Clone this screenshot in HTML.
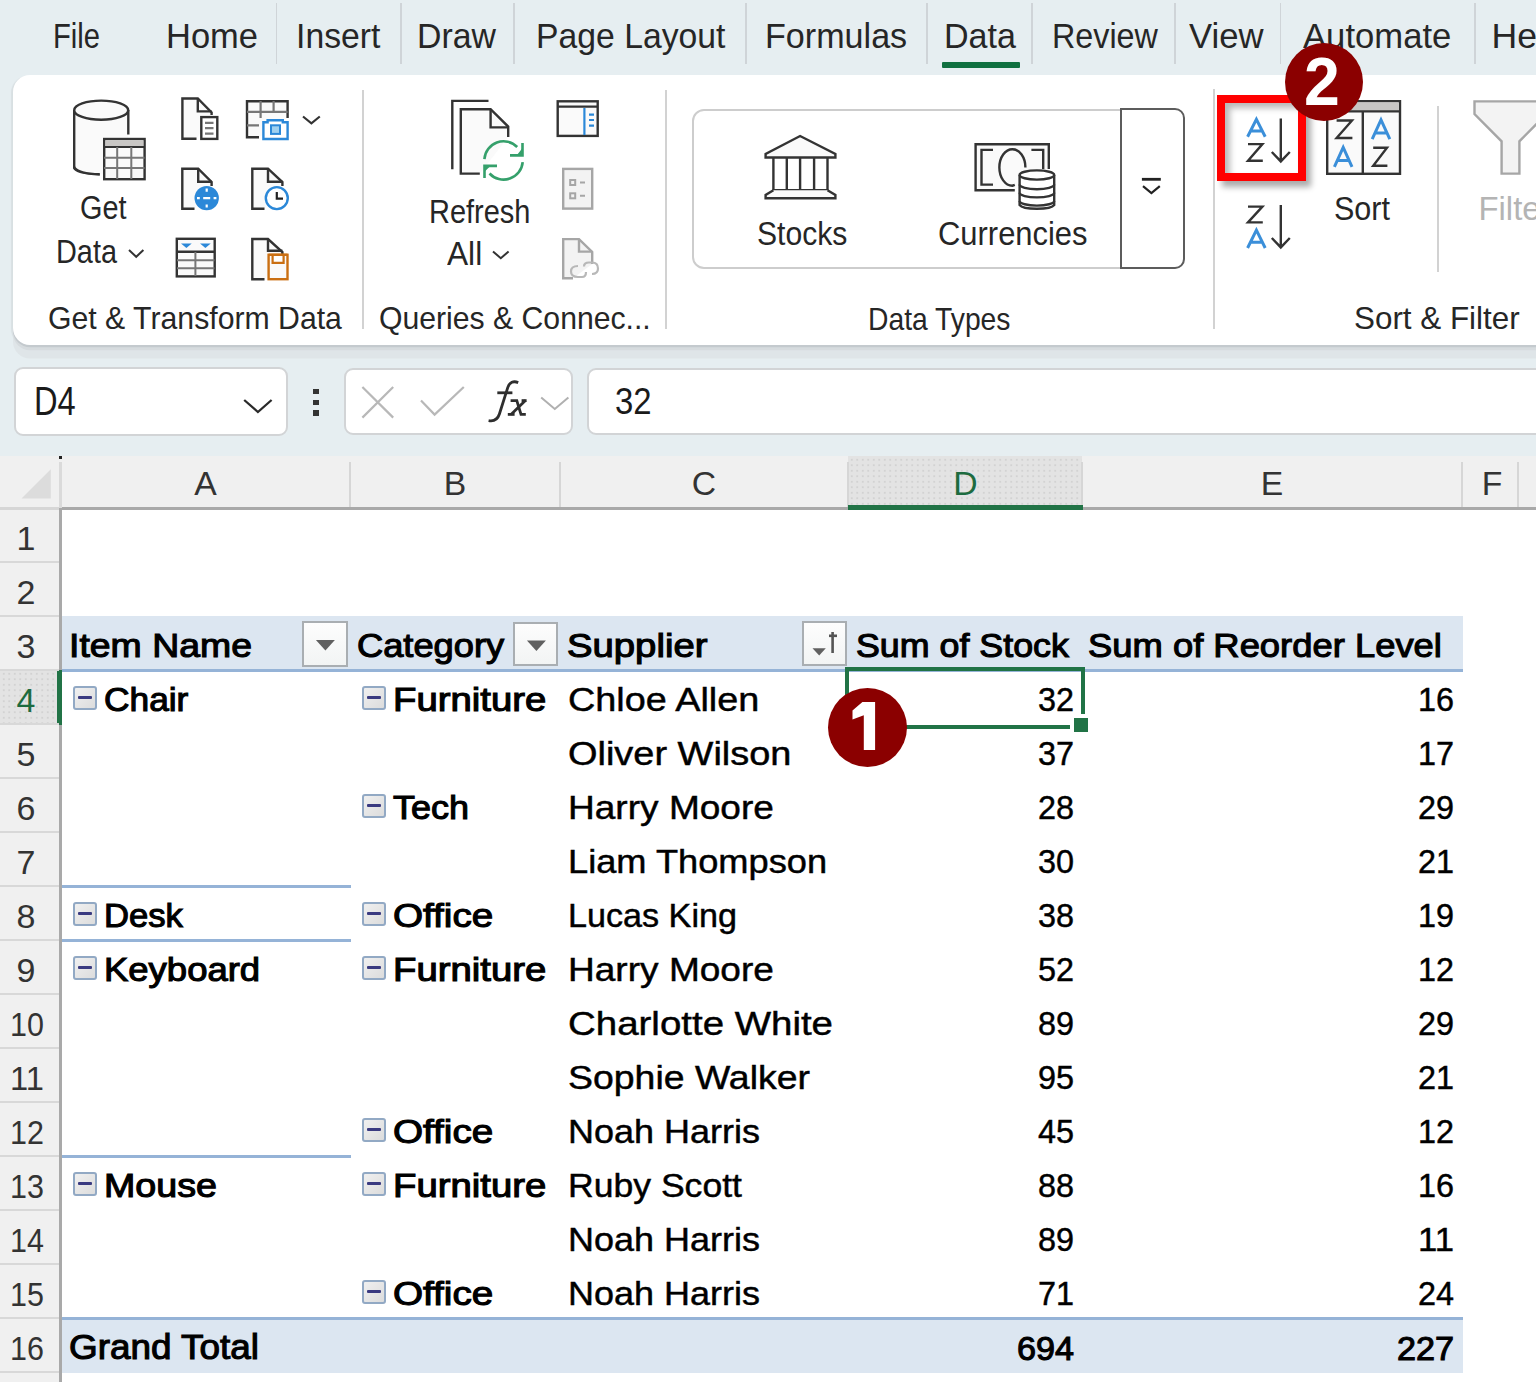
<!DOCTYPE html>
<html><head><meta charset="utf-8"><title>Excel</title>
<style>
html,body{margin:0;padding:0;}
body{width:1536px;height:1382px;overflow:hidden;position:relative;background:#e6eef1;font-family:"Liberation Sans",sans-serif;}
.t{position:absolute;white-space:nowrap;line-height:1;transform-origin:0 0;}
.a{position:absolute;}
</style></head><body>
<span class="t" style="left:53.00px;top:18.54px;font-size:35.61px;font-weight:normal;color:#262626;transform:scaleX(0.8193);">File</span>
<span class="t" style="left:166.00px;top:18.54px;font-size:35.61px;font-weight:normal;color:#262626;transform:scaleX(0.9683);">Home</span>
<span class="t" style="left:295.60px;top:18.54px;font-size:35.61px;font-weight:normal;color:#262626;transform:scaleX(0.9477);">Insert</span>
<span class="t" style="left:417.00px;top:18.54px;font-size:35.61px;font-weight:normal;color:#262626;transform:scaleX(0.9497);">Draw</span>
<span class="t" style="left:536.00px;top:18.54px;font-size:35.61px;font-weight:normal;color:#262626;transform:scaleX(0.9476);">Page Layout</span>
<span class="t" style="left:764.60px;top:18.54px;font-size:35.61px;font-weight:normal;color:#262626;transform:scaleX(0.9581);">Formulas</span>
<span class="t" style="left:944.00px;top:18.54px;font-size:35.61px;font-weight:normal;color:#262626;transform:scaleX(0.9569);">Data</span>
<span class="t" style="left:1052.00px;top:18.54px;font-size:35.61px;font-weight:normal;color:#262626;transform:scaleX(0.9070);">Review</span>
<span class="t" style="left:1189.00px;top:18.54px;font-size:35.61px;font-weight:normal;color:#262626;transform:scaleX(0.9735);">View</span>
<span class="t" style="left:1302.70px;top:18.54px;font-size:35.61px;font-weight:normal;color:#262626;transform:scaleX(0.9730);">Automate</span>
<span class="t" style="left:1491.50px;top:18.54px;font-size:35.61px;font-weight:normal;color:#262626;">He</span>
<div class="a" style="left:275.75px;top:3px;width:1.5px;height:61px;background:#cfd4d8"></div>
<div class="a" style="left:400.25px;top:3px;width:1.5px;height:61px;background:#cfd4d8"></div>
<div class="a" style="left:513.25px;top:3px;width:1.5px;height:61px;background:#cfd4d8"></div>
<div class="a" style="left:745.25px;top:3px;width:1.5px;height:61px;background:#cfd4d8"></div>
<div class="a" style="left:926.25px;top:3px;width:1.5px;height:61px;background:#cfd4d8"></div>
<div class="a" style="left:1031.25px;top:3px;width:1.5px;height:61px;background:#cfd4d8"></div>
<div class="a" style="left:1174.25px;top:3px;width:1.5px;height:61px;background:#cfd4d8"></div>
<div class="a" style="left:1279.75px;top:3px;width:1.5px;height:61px;background:#cfd4d8"></div>
<div class="a" style="left:1474.25px;top:3px;width:1.5px;height:61px;background:#cfd4d8"></div>
<div class="a" style="left:942px;top:62px;width:78px;height:5.5px;background:#107040;border-radius:1px"></div>
<div class="a" style="left:13px;top:75px;width:1600px;height:270.3px;background:#fff;border-radius:17px;box-shadow:0 2.3px 0 0 #c4cace,0 5.3px 0 0 #d6dbde,0 13.5px 0 0 #dfe5e8,-1.5px 1px 1px rgba(0,0,0,0.06)"></div>
<div class="a" style="left:362.40px;top:90px;width:2px;height:239px;background:#d2d2d2"></div>
<div class="a" style="left:664.80px;top:90px;width:2px;height:239px;background:#d2d2d2"></div>
<div class="a" style="left:1212.60px;top:89px;width:2px;height:240px;background:#d2d2d2"></div>
<div class="a" style="left:1436.60px;top:106px;width:2px;height:166px;background:#d2d2d2"></div>
<span class="t" style="left:48.00px;top:303.15px;font-size:30.52px;font-weight:normal;color:#262626;transform:scaleX(0.9903);">Get & Transform Data</span>
<span class="t" style="left:378.70px;top:303.15px;font-size:30.52px;font-weight:normal;color:#262626;transform:scaleX(0.9890);">Queries & Connec...</span>
<span class="t" style="left:868.00px;top:303.65px;font-size:30.52px;font-weight:normal;color:#262626;transform:scaleX(0.9263);">Data Types</span>
<span class="t" style="left:1353.70px;top:302.75px;font-size:30.52px;font-weight:normal;color:#262626;transform:scaleX(1.0283);">Sort & Filter</span>
<span class="t" style="left:80.00px;top:192.30px;font-size:32.70px;font-weight:normal;color:#262626;transform:scaleX(0.8821);">Get</span>
<span class="t" style="left:56.00px;top:236.30px;font-size:32.70px;font-weight:normal;color:#262626;transform:scaleX(0.8827);">Data</span>
<span class="t" style="left:428.60px;top:194.82px;font-size:33.87px;font-weight:normal;color:#262626;transform:scaleX(0.8552);">Refresh</span>
<span class="t" style="left:446.60px;top:238.18px;font-size:32.85px;font-weight:normal;color:#262626;transform:scaleX(0.9645);">All</span>
<span class="t" style="left:756.60px;top:216.73px;font-size:33.14px;font-weight:normal;color:#262626;transform:scaleX(0.9090);">Stocks</span>
<span class="t" style="left:938.40px;top:216.73px;font-size:33.14px;font-weight:normal;color:#262626;transform:scaleX(0.9337);">Currencies</span>
<span class="t" style="left:1334.00px;top:192.44px;font-size:33.72px;font-weight:normal;color:#262626;transform:scaleX(0.9055);">Sort</span>
<span class="t" style="left:1478.50px;top:192.78px;font-size:32.85px;font-weight:normal;color:#b4b4b4;">Filte</span>
<div class="a" style="left:691.6px;top:108.7px;width:493px;height:160px;box-sizing:border-box;border:2px solid #cdcdcd;border-radius:12px"></div>
<div class="a" style="left:1120.4px;top:108.1px;width:64.5px;height:161.2px;box-sizing:border-box;border:2.2px solid #5c5c5c;border-left-width:2.4px;border-radius:0 10px 10px 0;background:#fff"></div>
<svg class="a" style="left:0;top:0" width="1536" height="460" viewBox="0 0 1536 460" fill="none" stroke-linecap="butt" stroke-linejoin="miter">
<!-- Get Data: cylinder + table -->
<g stroke="#333" stroke-width="2.4">
 <path d="M74.2,110 V168 Q76,173 99.8,174.3" fill="#fafafa"/>
 <path d="M74.2,110 V168 Q80,174 99.8,174.3 H103 V137.8 H128.3 V110" fill="#fafafa" stroke="none"/>
 <path d="M74.2,110 V167" />
 <path d="M128.3,110 V134.5"/>
 <path d="M74.2,167 Q78,173.5 99.8,174.3"/>
 <ellipse cx="101.2" cy="110.2" rx="27" ry="9.6" fill="#fafafa"/>
 <rect x="104.2" y="139" width="40.4" height="40.2" fill="#fafafa"/>
</g>
<rect x="105.4" y="140.2" width="38" height="6" fill="#c8c6c4"/>
<g stroke="#333" stroke-width="2"><path d="M104,147 H144.6"/></g>
<g stroke="#777" stroke-width="2"><path d="M117.2,147 V179 M131.3,147 V179 M104,157.7 H144.6 M104,168 H144.6"/></g>

<!-- From text/csv -->
<g stroke="#333" stroke-width="2.4">
 <path d="M196.5,138.8 H182.4 V98.5 H197.8 L211.6,112.4 V115" fill="#fafafa"/>
 <path d="M197.8,98.5 V111.4 H211.6"/>
 <rect x="201.3" y="117.1" width="16" height="21.8" fill="#fff"/>
</g>
<g stroke="#777" stroke-width="2.2"><path d="M205,122.8 H213.5 M205,128.2 H213.5 M205,133.6 H213.5"/></g>

<!-- From table with camera -->
<g stroke="#333" stroke-width="2.4">
 <path d="M259,137.2 H247 V101.2 H287.6 V118" fill="#fafafa"/>
</g>
<g stroke="#777" stroke-width="2.2"><path d="M260.6,101 V118 M273.6,101 V112 M247,111.9 H287.6 M247,125.4 H259"/></g>
<g stroke="#2b88d8" stroke-width="2.4">
 <path d="M263.4,139 V122.2 H267.6 V120.3 H282.8 V122.2 H287.6 V139 Z" fill="#fff"/>
</g>
<rect x="271" y="125.3" width="9" height="8.6" fill="#9fd0ef" stroke="#2b88d8" stroke-width="2"/>
<path d="M303,116.5 L311.4,123.3 L319.8,116.5" stroke="#333" stroke-width="2.2"/>

<!-- From web -->
<g stroke="#333" stroke-width="2.4">
 <path d="M194.5,208.8 H182.3 V168.7 H198.2 L211.6,182 V186" fill="#fafafa"/>
 <path d="M198.2,168.7 V181.8 H211.6"/>
</g>
<circle cx="206.7" cy="198.1" r="12.2" fill="#2b88d8"/>
<g stroke="#fff" stroke-width="2.2"><path d="M197,198.1 H199.8 M203.2,198.1 H210.2 M213.6,198.1 H216.4 M206.7,188.6 V191.8 M206.7,204.4 V207.6"/></g>

<!-- From recent -->
<g stroke="#333" stroke-width="2.4">
 <path d="M264.5,208.8 H252.3 V168.7 H268 L282.4,182 V186" fill="#fafafa"/>
 <path d="M268,168.7 V181.8 H282.4"/>
</g>
<circle cx="276.8" cy="198.1" r="11" fill="#fff" stroke="#2b88d8" stroke-width="2.4"/>
<path d="M276.8,192 V198.6 H283" stroke="#222" stroke-width="2.2"/>

<!-- Existing connections table -->
<rect x="176.8" y="238.8" width="37.9" height="37.6" fill="#fafafa" stroke="#333" stroke-width="2.4"/>
<path d="M176.8,251.7 H214.7" stroke="#333" stroke-width="2.4"/>
<g stroke="#777" stroke-width="2"><path d="M195.4,252 V276 M177,260.2 H214.5 M177,268.2 H214.5"/></g>
<polygon points="181,243.4 191.7,243.4 186.4,248" fill="#2b88d8"/>
<polygon points="200,243.4 210.7,243.4 205.4,248" fill="#2b88d8"/>

<!-- Doc with orange -->
<g stroke="#333" stroke-width="2.4">
 <path d="M264.5,279.2 H252.3 V239 H268 L282.4,252 V254" fill="#fafafa"/>
 <path d="M268,239 V250.8 H282.4"/>
</g>
<rect x="268.6" y="254.8" width="18.9" height="24.4" fill="#fafafa" stroke="#ca6f12" stroke-width="2.4"/>
<path d="M272.6,254.8 V262.8 H283.6 V254.8" stroke="#ca6f12" stroke-width="2.2" fill="#fff"/>
<path d="M268.6,254.8 H287.5" stroke="#ca6f12" stroke-width="2.4"/>

<!-- Get Data chevron -->
<path d="M129,250 L136.2,256.8 L143.4,250" stroke="#333" stroke-width="2"/>

<!-- Refresh All -->
<g stroke="#333" stroke-width="2.4">
 <path d="M452.3,169.3 V100.9 H488.5"/>
 <path d="M479.8,173.6 H460.8 V109.2 H490.6 L508.2,126.6 V137" fill="#fafafa"/>
 <path d="M490.6,109.2 V127.4 H508.2"/>
</g>
<g stroke="#35a06b" stroke-width="2.6" fill="none">
 <path d="M484.4,159.2 A19.2,19.2 0 0 1 517.2,147"/>
 <path d="M522.7,162.1 A19.2,19.2 0 0 1 489.5,173.5"/>
 <path d="M510,155.4 H522.5 V143.1"/>
 <path d="M497,165.9 H484.5 V178"/>
</g>
<polygon points="522.5,148 522.5,155.4 516.6,155.4" fill="#35a06b"/>
<polygon points="484.5,165.9 490.4,165.9 484.5,171.8" fill="#35a06b"/>
<path d="M493,251.5 L500.8,258.2 L508.6,251.5" stroke="#333" stroke-width="2"/>

<!-- Queries pane -->
<rect x="557.7" y="101.3" width="40" height="34.6" fill="#fafafa" stroke="#333" stroke-width="2.4"/>
<path d="M557.7,106.6 H597.7" stroke="#333" stroke-width="2.2"/>
<path d="M584.4,108 V135" stroke="#2b88d8" stroke-width="2.2"/>
<g stroke="#2b88d8" stroke-width="2.2"><path d="M589,114.6 H594 M589,120 H594 M589,125.6 H594"/></g>
<!-- properties gray -->
<rect x="563.2" y="168.9" width="29" height="39.7" fill="#f3f3f3" stroke="#a6a6a6" stroke-width="2.4"/>
<g stroke="#a6a6a6" stroke-width="2"><rect x="570.2" y="180" width="5" height="5"/><rect x="570.2" y="193.3" width="5" height="5"/><path d="M580,182.5 H585 M580,195.8 H585"/></g>
<!-- edit links gray -->
<g stroke="#a6a6a6" stroke-width="2.4">
 <path d="M573,278.3 H563.2 V239.1 H579 L592.2,252 V264" fill="#f3f3f3"/>
 <path d="M579,239.1 V251.6 H592.2"/>
</g>
<g stroke="#b8b8b8" stroke-width="2.2"><path d="M578,266 Q571,266 571,271.5 Q571,277 578,277 H582 Q586,277 586,272"/><path d="M584,266.5 Q584,262.5 589,262.5 H592 Q598,262.5 598,268.5 Q598,274 592,274"/></g>

<!-- Bank -->
<g stroke="#333" stroke-width="2.4">
 <path d="M765.6,157.5 V154 L800.1,136 L835.4,154 V157.5 Z" fill="#fafafa"/>
 <path d="M773.4,158 V190 M786.8,158 V190 M800.1,158 V190 M814.1,158 V190 M827.5,158 V190"/>
 <path d="M773.4,190.3 H827.5"/>
 <path d="M773.4,190.3 L765.6,195 V198.3 H835.4 V195 L827.5,190.3" fill="#fafafa"/>
</g>

<!-- Currency -->
<g stroke="#333" stroke-width="2.4">
 <path d="M1014.8,190.3 H975.6 V144.2 H1048.8 V169" fill="#fafafa"/>
 <path d="M993,149.9 H981.5 V184.6 H993"/>
 <path d="M1031.4,149.9 H1043.2 V169"/>
 <path d="M1014.8,184.8 Q1012.4,185.7 1012.4,185.7 A13,18.2 0 0 1 1012.4,149.2 A13,18.2 0 0 1 1025.4,167.4"/>
 <path d="M1019.6,175 V205 A17.6,4.6 0 0 0 1054.2,205 V175" fill="#fff"/>
 <ellipse cx="1036.9" cy="175" rx="17.3" ry="4.6" fill="#fff"/>
 <path d="M1019.6,184.6 A17.3,4.6 0 0 0 1054.2,184.6 M1019.6,192.8 A17.3,4.6 0 0 0 1054.2,192.8 M1019.6,201 A17.3,4.6 0 0 0 1054.2,201"/>
</g>

<!-- gallery dropdown glyph -->
<rect x="1141.9" y="177.9" width="18.9" height="2.8" fill="#222"/>
<path d="M1143,186.2 L1151.4,193 L1159.8,186.2" stroke="#222" stroke-width="2.2"/>

<!-- Sort A-Z small -->
<g font-family="Liberation Sans" font-size="21" >
</g>
<!-- Sort big icon -->
<rect x="1327.2" y="101.2" width="72.8" height="72.6" fill="#fafafa" stroke="#333" stroke-width="2.4"/>
<rect x="1328.4" y="102.4" width="70.4" height="8.4" fill="#c8c6c4"/>
<path d="M1327.2,111.4 H1400 M1362.8,111.4 V173.8" stroke="#333" stroke-width="2.4"/>

<!-- Filter funnel -->
<path d="M1474.5,101.4 H1546.5 V114 L1519.4,141.3 V173.6 H1501.6 V141.3 L1474.5,114 Z" fill="#f3f3f3" stroke="#a6a6a6" stroke-width="2.4"/>

<!-- sort letters -->
<g stroke="#3b8fd9" stroke-width="3" stroke-linejoin="miter">
 <path d="M1247.6,136.8 L1256.4,119.4 L1265.2,136.8 M1250.6,131 H1262.2"/>
 <path d="M1247.6,248 L1256.4,230.2 L1265.2,248 M1250.6,242.2 H1262.2"/>
 <path d="M1334.4,166.9 L1343.2,147.4 L1352,166.9 M1337.6,160.6 H1348.8"/>
 <path d="M1372.2,139.2 L1381,119.9 L1389.8,139.2 M1375.4,132.9 H1386.6"/>
</g>
<g stroke="#333" stroke-width="2.4">
 <path d="M1248,144.1 H1262.4 L1248,160.8 H1262.8"/>
 <path d="M1248,206.6 H1262.4 L1248,222.4 H1262.8"/>
 <path d="M1336.6,120.5 H1352 L1336.6,138 H1352.4"/>
 <path d="M1373.2,147.8 H1387 L1373.2,165.7 H1387.4"/>
 <path d="M1280.8,118.6 V161 M1271.8,152 L1280.8,161.4 L1289.8,152"/>
 <path d="M1280.8,205 V247 M1271.8,238 L1280.8,247.4 L1289.8,238"/>
</g>
</svg>
<div class="a" style="left:14.3px;top:367.3px;width:273.5px;height:69px;box-sizing:border-box;background:#fff;border:2.4px solid #d2d4d6;border-radius:9px"></div>
<div class="a" style="left:344.3px;top:368.2px;width:229.2px;height:67.2px;box-sizing:border-box;background:#fff;border:2.4px solid #d2d4d6;border-radius:9px"></div>
<div class="a" style="left:586.5px;top:368.2px;width:1000px;height:67.2px;box-sizing:border-box;background:#fff;border:2.4px solid #d2d4d6;border-radius:9px"></div>
<span class="t" style="left:33.80px;top:381.64px;font-size:39.97px;font-weight:normal;color:#1a1a1a;transform:scaleX(0.8163);">D4</span>
<span class="t" style="left:615.00px;top:382.99px;font-size:37.79px;font-weight:normal;color:#1a1a1a;transform:scaleX(0.8709);">32</span>
<svg class="a" style="left:0;top:0" width="1536" height="460" viewBox="0 0 1536 460" fill="none">
<!-- Formula bar: X check fx chevrons -->
<path d="M362.4,387 L393.2,417.6 M393.2,387 L362.4,417.6" stroke="#b8b8b8" stroke-width="2.2"/>
<path d="M421,400.6 L434.6,414.6 L463.8,387" stroke="#b8b8b8" stroke-width="2.2"/>
<path d="M541.2,397.6 L554.8,409 L568.4,397.6" stroke="#b0b0b0" stroke-width="2"/>
<path d="M244.2,400 L257.9,412 L271.6,400" stroke="#2a2a2a" stroke-width="2.3"/>
<g stroke="#2e2e2e" stroke-width="2.8" fill="none" stroke-linecap="butt">
 <path d="M518.2,382.6 C513.5,380.6 509.6,382.2 507.8,387.4 L499.4,414 C497.6,419.6 494.2,421.6 488.6,420.6"/>
 <path d="M497.3,392.8 H512.4"/>
 <path d="M510.6,400.6 H516.8 L521,414.4 H525.8"/>
 <path d="M521.6,400.6 H526.6"/>
 <path d="M525.4,400.6 L511,414.4"/>
 <path d="M507.8,414.4 H514.6"/>
</g>
</svg>
<div class="a" style="left:312.9px;top:388.8px;width:6px;height:5.5px;background:#333"></div>
<div class="a" style="left:312.9px;top:399.5px;width:6px;height:5.5px;background:#333"></div>
<div class="a" style="left:312.9px;top:410.2px;width:6px;height:5.5px;background:#333"></div>
<div class="a" style="left:0;top:456px;width:1536px;height:926px;background:#fff"></div>
<div class="a" style="left:0;top:456px;width:1536px;height:52px;background:#f0f0f0"></div>
<div class="a" style="left:0;top:456px;width:60px;height:926px;background:#f0f0f0"></div>
<div class="a" style="left:848px;top:456px;width:234px;height:52px;background:#e3e3e3 radial-gradient(circle,#d2d2d2 0.9px,transparent 1.2px) 1px 1px/5.5px 5.5px"></div>
<div class="a" style="left:848px;top:505px;width:234.5px;height:5px;background:#217346"></div>
<div class="a" style="left:0;top:670px;width:60px;height:55px;background:#e3e3e3 radial-gradient(circle,#d2d2d2 0.9px,transparent 1.2px) 1px 1px/5.5px 5.5px"></div>
<div class="a" style="left:57px;top:670px;width:5px;height:55px;background:#217346"></div>
<svg class="a" style="left:0;top:456px" width="60" height="52"><polygon points="50.8,13.3 50.8,42.6 21.5,42.6" fill="#dcdcdc"/></svg>
<div class="a" style="left:348.5px;top:462px;width:2px;height:45px;background:#d6d6d6"></div>
<div class="a" style="left:558.8px;top:462px;width:2px;height:45px;background:#d6d6d6"></div>
<div class="a" style="left:847.0px;top:462px;width:2px;height:45px;background:#d6d6d6"></div>
<div class="a" style="left:1081.0px;top:462px;width:2px;height:45px;background:#d6d6d6"></div>
<div class="a" style="left:1460.7px;top:462px;width:2px;height:45px;background:#d6d6d6"></div>
<div class="a" style="left:1517.4px;top:462px;width:2px;height:45px;background:#d6d6d6"></div>
<div class="a" style="left:62px;top:507px;width:1474px;height:3px;background:#a9a9a9"></div>
<div class="a" style="left:0;top:507px;width:62px;height:3px;background:#d6d6d6"></div>
<div class="a" style="left:59px;top:508px;width:3px;height:874px;background:#a9a9a9"></div>
<div class="a" style="left:59px;top:462px;width:3px;height:46px;background:#dadada"></div>
<div class="a" style="left:59px;top:456px;width:3px;height:3px;background:#222"></div>
<div class="a" style="left:848px;top:505px;width:234.5px;height:5px;background:#217346"></div>
<div class="a" style="left:57px;top:670px;width:5px;height:55px;background:#217346"></div>
<div class="a" style="left:0;top:561.0px;width:59px;height:2px;background:#d8d8d8"></div>
<div class="a" style="left:0;top:615.0px;width:59px;height:2px;background:#d8d8d8"></div>
<div class="a" style="left:0;top:669.0px;width:59px;height:2px;background:#d8d8d8"></div>
<div class="a" style="left:0;top:723.0px;width:59px;height:2px;background:#d8d8d8"></div>
<div class="a" style="left:0;top:777.0px;width:59px;height:2px;background:#d8d8d8"></div>
<div class="a" style="left:0;top:831.0px;width:59px;height:2px;background:#d8d8d8"></div>
<div class="a" style="left:0;top:885.0px;width:59px;height:2px;background:#d8d8d8"></div>
<div class="a" style="left:0;top:939.0px;width:59px;height:2px;background:#d8d8d8"></div>
<div class="a" style="left:0;top:993.0px;width:59px;height:2px;background:#d8d8d8"></div>
<div class="a" style="left:0;top:1047.0px;width:59px;height:2px;background:#d8d8d8"></div>
<div class="a" style="left:0;top:1101.0px;width:59px;height:2px;background:#d8d8d8"></div>
<div class="a" style="left:0;top:1155.0px;width:59px;height:2px;background:#d8d8d8"></div>
<div class="a" style="left:0;top:1209.0px;width:59px;height:2px;background:#d8d8d8"></div>
<div class="a" style="left:0;top:1263.0px;width:59px;height:2px;background:#d8d8d8"></div>
<div class="a" style="left:0;top:1317.0px;width:59px;height:2px;background:#d8d8d8"></div>
<div class="a" style="left:0;top:1371.0px;width:59px;height:2px;background:#d8d8d8"></div>
<div class="a" style="left:0;top:1425.0px;width:59px;height:2px;background:#d8d8d8"></div>
<span class="t" style="left:194.25px;top:467.44px;font-size:33.72px;font-weight:normal;color:#333;">A</span>
<span class="t" style="left:443.75px;top:467.44px;font-size:33.72px;font-weight:normal;color:#333;">B</span>
<span class="t" style="left:691.83px;top:467.44px;font-size:33.72px;font-weight:normal;color:#333;">C</span>
<span class="t" style="left:953.33px;top:467.44px;font-size:33.72px;font-weight:normal;color:#1d6b3f;">D</span>
<span class="t" style="left:1260.75px;top:467.44px;font-size:33.72px;font-weight:normal;color:#333;">E</span>
<span class="t" style="left:1481.70px;top:467.44px;font-size:33.72px;font-weight:normal;color:#333;">F</span>
<span class="t" style="left:16.40px;top:520.59px;font-size:34.01px;font-weight:normal;color:#333;">1</span>
<span class="t" style="left:16.40px;top:574.59px;font-size:34.01px;font-weight:normal;color:#333;">2</span>
<span class="t" style="left:16.40px;top:628.59px;font-size:34.01px;font-weight:normal;color:#333;">3</span>
<span class="t" style="left:16.40px;top:682.59px;font-size:34.01px;font-weight:normal;color:#1d6b3f;">4</span>
<span class="t" style="left:16.40px;top:736.59px;font-size:34.01px;font-weight:normal;color:#333;">5</span>
<span class="t" style="left:16.40px;top:790.59px;font-size:34.01px;font-weight:normal;color:#333;">6</span>
<span class="t" style="left:16.40px;top:844.59px;font-size:34.01px;font-weight:normal;color:#333;">7</span>
<span class="t" style="left:16.40px;top:898.59px;font-size:34.01px;font-weight:normal;color:#333;">8</span>
<span class="t" style="left:16.40px;top:952.59px;font-size:34.01px;font-weight:normal;color:#333;">9</span>
<span class="t" style="left:10.40px;top:1006.59px;font-size:34.01px;font-weight:normal;color:#333;transform:scaleX(0.8963);">10</span>
<span class="t" style="left:10.40px;top:1060.59px;font-size:34.01px;font-weight:normal;color:#333;transform:scaleX(0.9602);">11</span>
<span class="t" style="left:10.40px;top:1114.59px;font-size:34.01px;font-weight:normal;color:#333;transform:scaleX(0.8963);">12</span>
<span class="t" style="left:10.40px;top:1168.59px;font-size:34.01px;font-weight:normal;color:#333;transform:scaleX(0.8963);">13</span>
<span class="t" style="left:10.40px;top:1222.59px;font-size:34.01px;font-weight:normal;color:#333;transform:scaleX(0.8963);">14</span>
<span class="t" style="left:10.40px;top:1276.59px;font-size:34.01px;font-weight:normal;color:#333;transform:scaleX(0.8963);">15</span>
<span class="t" style="left:10.40px;top:1330.59px;font-size:34.01px;font-weight:normal;color:#333;transform:scaleX(0.8963);">16</span>
<div class="a" style="left:62px;top:616px;width:1401px;height:54px;background:#dce6f1"></div>
<div class="a" style="left:62px;top:669px;width:1401px;height:3px;background:#95b3d7"></div>
<div class="a" style="left:62px;top:1318px;width:1401px;height:55px;background:#dce6f1"></div>
<div class="a" style="left:62px;top:1317px;width:1401px;height:3px;background:#95b3d7"></div>
<div class="a" style="left:62px;top:884.5px;width:289px;height:3px;background:#95b3d7"></div>
<div class="a" style="left:62px;top:938.5px;width:289px;height:3px;background:#95b3d7"></div>
<div class="a" style="left:62px;top:1154.5px;width:289px;height:3px;background:#95b3d7"></div>
<div class="a" style="left:302.3px;top:621.2px;width:45.599999999999966px;height:45.59999999999991px;box-sizing:border-box;border:2.5px solid #a9aeb2;background:linear-gradient(#fdfdfd,#f2f4f4)"></div>
<div class="a" style="left:513.3px;top:621.8px;width:45.10000000000002px;height:44.10000000000002px;box-sizing:border-box;border:2.5px solid #a9aeb2;background:linear-gradient(#fdfdfd,#f2f4f4)"></div>
<div class="a" style="left:802px;top:621.2px;width:45.39999999999998px;height:45.299999999999955px;box-sizing:border-box;border:2.5px solid #a9aeb2;background:linear-gradient(#fdfdfd,#f2f4f4)"></div>
<svg class="a" style="left:0;top:600px" width="900" height="80"><polygon points="315.9,40 334.9,40 325.4,50.5" fill="#606060"/><polygon points="526.9,40.4 545.9,40.4 536.4,50.9" fill="#606060"/><polygon points="812.5,48.3 825.8,48.3 819.2,55.6" fill="#606060"/><rect x="831.3" y="32" width="2.6" height="21" fill="#555"/><rect x="829" y="34.5" width="8" height="2.6" fill="#555"/></svg>
<span class="t" style="left:69.00px;top:629.45px;font-size:32.99px;font-weight:normal;color:#000;transform:scaleX(1.1342);-webkit-text-stroke:1.1px #000;">Item Name</span>
<span class="t" style="left:357.00px;top:629.45px;font-size:32.99px;font-weight:normal;color:#000;transform:scaleX(1.0994);-webkit-text-stroke:1.1px #000;">Category</span>
<span class="t" style="left:566.80px;top:629.45px;font-size:32.99px;font-weight:normal;color:#000;transform:scaleX(1.1606);-webkit-text-stroke:1.1px #000;">Supplier</span>
<span class="t" style="left:856.00px;top:629.45px;font-size:32.99px;font-weight:normal;color:#000;transform:scaleX(1.0852);-webkit-text-stroke:1.1px #000;">Sum of Stock</span>
<span class="t" style="left:1088.00px;top:629.45px;font-size:32.99px;font-weight:normal;color:#000;transform:scaleX(1.1030);-webkit-text-stroke:1.1px #000;">Sum of Reorder Level</span>
<div class="a" style="left:73px;top:685.7px;width:24px;height:24px;box-sizing:border-box;border:2.5px solid #92a9c4;border-radius:3px;background:linear-gradient(135deg,#f0f0f0,#dcdcdc)"></div><div class="a" style="left:78.1px;top:696.1px;width:13.8px;height:2.8px;background:#3a3a80;border-radius:1px"></div>
<span class="t" style="left:104.30px;top:683.35px;font-size:32.99px;font-weight:normal;color:#000;transform:scaleX(1.0703);-webkit-text-stroke:1.1px #000;">Chair</span>
<div class="a" style="left:362px;top:685.7px;width:24px;height:24px;box-sizing:border-box;border:2.5px solid #92a9c4;border-radius:3px;background:linear-gradient(135deg,#f0f0f0,#dcdcdc)"></div><div class="a" style="left:367.1px;top:696.1px;width:13.8px;height:2.8px;background:#3a3a80;border-radius:1px"></div>
<span class="t" style="left:393.30px;top:683.35px;font-size:32.99px;font-weight:normal;color:#000;transform:scaleX(1.1625);-webkit-text-stroke:1.1px #000;">Furniture</span>
<span class="t" style="left:568.00px;top:683.35px;font-size:32.99px;font-weight:normal;color:#000;transform:scaleX(1.1461);-webkit-text-stroke:0.45px #000;">Chloe Allen</span>
<span class="t" style="left:1038.20px;top:682.49px;font-size:34.01px;font-weight:normal;color:#000;transform:scaleX(0.9519);-webkit-text-stroke:0.45px #000;">32</span>
<span class="t" style="left:1418.30px;top:682.49px;font-size:34.01px;font-weight:normal;color:#000;transform:scaleX(0.9519);-webkit-text-stroke:0.45px #000;">16</span>
<span class="t" style="left:568.00px;top:737.35px;font-size:32.99px;font-weight:normal;color:#000;transform:scaleX(1.1501);-webkit-text-stroke:0.45px #000;">Oliver Wilson</span>
<span class="t" style="left:1038.20px;top:736.49px;font-size:34.01px;font-weight:normal;color:#000;transform:scaleX(0.9519);-webkit-text-stroke:0.45px #000;">37</span>
<span class="t" style="left:1418.30px;top:736.49px;font-size:34.01px;font-weight:normal;color:#000;transform:scaleX(0.9519);-webkit-text-stroke:0.45px #000;">17</span>
<div class="a" style="left:362px;top:793.7px;width:24px;height:24px;box-sizing:border-box;border:2.5px solid #92a9c4;border-radius:3px;background:linear-gradient(135deg,#f0f0f0,#dcdcdc)"></div><div class="a" style="left:367.1px;top:804.1px;width:13.8px;height:2.8px;background:#3a3a80;border-radius:1px"></div>
<span class="t" style="left:393.30px;top:791.35px;font-size:32.99px;font-weight:normal;color:#000;transform:scaleX(1.0906);-webkit-text-stroke:1.1px #000;">Tech</span>
<span class="t" style="left:568.00px;top:791.35px;font-size:32.99px;font-weight:normal;color:#000;transform:scaleX(1.1235);-webkit-text-stroke:0.45px #000;">Harry Moore</span>
<span class="t" style="left:1038.20px;top:790.49px;font-size:34.01px;font-weight:normal;color:#000;transform:scaleX(0.9519);-webkit-text-stroke:0.45px #000;">28</span>
<span class="t" style="left:1418.30px;top:790.49px;font-size:34.01px;font-weight:normal;color:#000;transform:scaleX(0.9519);-webkit-text-stroke:0.45px #000;">29</span>
<span class="t" style="left:568.00px;top:845.35px;font-size:32.99px;font-weight:normal;color:#000;transform:scaleX(1.0984);-webkit-text-stroke:0.45px #000;">Liam Thompson</span>
<span class="t" style="left:1038.20px;top:844.49px;font-size:34.01px;font-weight:normal;color:#000;transform:scaleX(0.9519);-webkit-text-stroke:0.45px #000;">30</span>
<span class="t" style="left:1418.30px;top:844.49px;font-size:34.01px;font-weight:normal;color:#000;transform:scaleX(0.9519);-webkit-text-stroke:0.45px #000;">21</span>
<div class="a" style="left:73px;top:901.7px;width:24px;height:24px;box-sizing:border-box;border:2.5px solid #92a9c4;border-radius:3px;background:linear-gradient(135deg,#f0f0f0,#dcdcdc)"></div><div class="a" style="left:78.1px;top:912.1px;width:13.8px;height:2.8px;background:#3a3a80;border-radius:1px"></div>
<span class="t" style="left:104.30px;top:899.35px;font-size:32.99px;font-weight:normal;color:#000;transform:scaleX(1.0502);-webkit-text-stroke:1.1px #000;">Desk</span>
<div class="a" style="left:362px;top:901.7px;width:24px;height:24px;box-sizing:border-box;border:2.5px solid #92a9c4;border-radius:3px;background:linear-gradient(135deg,#f0f0f0,#dcdcdc)"></div><div class="a" style="left:367.1px;top:912.1px;width:13.8px;height:2.8px;background:#3a3a80;border-radius:1px"></div>
<span class="t" style="left:393.30px;top:899.35px;font-size:32.99px;font-weight:normal;color:#000;transform:scaleX(1.1719);-webkit-text-stroke:1.1px #000;">Office</span>
<span class="t" style="left:568.00px;top:899.35px;font-size:32.99px;font-weight:normal;color:#000;transform:scaleX(1.0352);-webkit-text-stroke:0.45px #000;">Lucas King</span>
<span class="t" style="left:1038.20px;top:898.49px;font-size:34.01px;font-weight:normal;color:#000;transform:scaleX(0.9519);-webkit-text-stroke:0.45px #000;">38</span>
<span class="t" style="left:1418.30px;top:898.49px;font-size:34.01px;font-weight:normal;color:#000;transform:scaleX(0.9519);-webkit-text-stroke:0.45px #000;">19</span>
<div class="a" style="left:73px;top:955.7px;width:24px;height:24px;box-sizing:border-box;border:2.5px solid #92a9c4;border-radius:3px;background:linear-gradient(135deg,#f0f0f0,#dcdcdc)"></div><div class="a" style="left:78.1px;top:966.1px;width:13.8px;height:2.8px;background:#3a3a80;border-radius:1px"></div>
<span class="t" style="left:104.30px;top:953.35px;font-size:32.99px;font-weight:normal;color:#000;transform:scaleX(1.1059);-webkit-text-stroke:1.1px #000;">Keyboard</span>
<div class="a" style="left:362px;top:955.7px;width:24px;height:24px;box-sizing:border-box;border:2.5px solid #92a9c4;border-radius:3px;background:linear-gradient(135deg,#f0f0f0,#dcdcdc)"></div><div class="a" style="left:367.1px;top:966.1px;width:13.8px;height:2.8px;background:#3a3a80;border-radius:1px"></div>
<span class="t" style="left:393.30px;top:953.35px;font-size:32.99px;font-weight:normal;color:#000;transform:scaleX(1.1625);-webkit-text-stroke:1.1px #000;">Furniture</span>
<span class="t" style="left:568.00px;top:953.35px;font-size:32.99px;font-weight:normal;color:#000;transform:scaleX(1.1235);-webkit-text-stroke:0.45px #000;">Harry Moore</span>
<span class="t" style="left:1038.20px;top:952.49px;font-size:34.01px;font-weight:normal;color:#000;transform:scaleX(0.9519);-webkit-text-stroke:0.45px #000;">52</span>
<span class="t" style="left:1418.30px;top:952.49px;font-size:34.01px;font-weight:normal;color:#000;transform:scaleX(0.9519);-webkit-text-stroke:0.45px #000;">12</span>
<span class="t" style="left:568.00px;top:1007.35px;font-size:32.99px;font-weight:normal;color:#000;transform:scaleX(1.1658);-webkit-text-stroke:0.45px #000;">Charlotte White</span>
<span class="t" style="left:1038.20px;top:1006.49px;font-size:34.01px;font-weight:normal;color:#000;transform:scaleX(0.9519);-webkit-text-stroke:0.45px #000;">89</span>
<span class="t" style="left:1418.30px;top:1006.49px;font-size:34.01px;font-weight:normal;color:#000;transform:scaleX(0.9519);-webkit-text-stroke:0.45px #000;">29</span>
<span class="t" style="left:568.00px;top:1061.35px;font-size:32.99px;font-weight:normal;color:#000;transform:scaleX(1.1343);-webkit-text-stroke:0.45px #000;">Sophie Walker</span>
<span class="t" style="left:1038.20px;top:1060.49px;font-size:34.01px;font-weight:normal;color:#000;transform:scaleX(0.9519);-webkit-text-stroke:0.45px #000;">95</span>
<span class="t" style="left:1418.30px;top:1060.49px;font-size:34.01px;font-weight:normal;color:#000;transform:scaleX(0.9519);-webkit-text-stroke:0.45px #000;">21</span>
<div class="a" style="left:362px;top:1117.7px;width:24px;height:24px;box-sizing:border-box;border:2.5px solid #92a9c4;border-radius:3px;background:linear-gradient(135deg,#f0f0f0,#dcdcdc)"></div><div class="a" style="left:367.1px;top:1128.1px;width:13.8px;height:2.8px;background:#3a3a80;border-radius:1px"></div>
<span class="t" style="left:393.30px;top:1115.35px;font-size:32.99px;font-weight:normal;color:#000;transform:scaleX(1.1719);-webkit-text-stroke:1.1px #000;">Office</span>
<span class="t" style="left:568.00px;top:1115.35px;font-size:32.99px;font-weight:normal;color:#000;transform:scaleX(1.0908);-webkit-text-stroke:0.45px #000;">Noah Harris</span>
<span class="t" style="left:1038.20px;top:1114.49px;font-size:34.01px;font-weight:normal;color:#000;transform:scaleX(0.9519);-webkit-text-stroke:0.45px #000;">45</span>
<span class="t" style="left:1418.30px;top:1114.49px;font-size:34.01px;font-weight:normal;color:#000;transform:scaleX(0.9519);-webkit-text-stroke:0.45px #000;">12</span>
<div class="a" style="left:73px;top:1171.7px;width:24px;height:24px;box-sizing:border-box;border:2.5px solid #92a9c4;border-radius:3px;background:linear-gradient(135deg,#f0f0f0,#dcdcdc)"></div><div class="a" style="left:78.1px;top:1182.1px;width:13.8px;height:2.8px;background:#3a3a80;border-radius:1px"></div>
<span class="t" style="left:104.30px;top:1169.35px;font-size:32.99px;font-weight:normal;color:#000;transform:scaleX(1.1412);-webkit-text-stroke:1.1px #000;">Mouse</span>
<div class="a" style="left:362px;top:1171.7px;width:24px;height:24px;box-sizing:border-box;border:2.5px solid #92a9c4;border-radius:3px;background:linear-gradient(135deg,#f0f0f0,#dcdcdc)"></div><div class="a" style="left:367.1px;top:1182.1px;width:13.8px;height:2.8px;background:#3a3a80;border-radius:1px"></div>
<span class="t" style="left:393.30px;top:1169.35px;font-size:32.99px;font-weight:normal;color:#000;transform:scaleX(1.1625);-webkit-text-stroke:1.1px #000;">Furniture</span>
<span class="t" style="left:568.00px;top:1169.35px;font-size:32.99px;font-weight:normal;color:#000;transform:scaleX(1.0782);-webkit-text-stroke:0.45px #000;">Ruby Scott</span>
<span class="t" style="left:1038.20px;top:1168.49px;font-size:34.01px;font-weight:normal;color:#000;transform:scaleX(0.9519);-webkit-text-stroke:0.45px #000;">88</span>
<span class="t" style="left:1418.30px;top:1168.49px;font-size:34.01px;font-weight:normal;color:#000;transform:scaleX(0.9519);-webkit-text-stroke:0.45px #000;">16</span>
<span class="t" style="left:568.00px;top:1223.35px;font-size:32.99px;font-weight:normal;color:#000;transform:scaleX(1.0908);-webkit-text-stroke:0.45px #000;">Noah Harris</span>
<span class="t" style="left:1038.20px;top:1222.49px;font-size:34.01px;font-weight:normal;color:#000;transform:scaleX(0.9519);-webkit-text-stroke:0.45px #000;">89</span>
<span class="t" style="left:1418.30px;top:1222.49px;font-size:34.01px;font-weight:normal;color:#000;transform:scaleX(1.0197);-webkit-text-stroke:0.45px #000;">11</span>
<div class="a" style="left:362px;top:1279.7px;width:24px;height:24px;box-sizing:border-box;border:2.5px solid #92a9c4;border-radius:3px;background:linear-gradient(135deg,#f0f0f0,#dcdcdc)"></div><div class="a" style="left:367.1px;top:1290.1px;width:13.8px;height:2.8px;background:#3a3a80;border-radius:1px"></div>
<span class="t" style="left:393.30px;top:1277.35px;font-size:32.99px;font-weight:normal;color:#000;transform:scaleX(1.1719);-webkit-text-stroke:1.1px #000;">Office</span>
<span class="t" style="left:568.00px;top:1277.35px;font-size:32.99px;font-weight:normal;color:#000;transform:scaleX(1.0908);-webkit-text-stroke:0.45px #000;">Noah Harris</span>
<span class="t" style="left:1038.20px;top:1276.49px;font-size:34.01px;font-weight:normal;color:#000;transform:scaleX(0.9519);-webkit-text-stroke:0.45px #000;">71</span>
<span class="t" style="left:1418.30px;top:1276.49px;font-size:34.01px;font-weight:normal;color:#000;transform:scaleX(0.9519);-webkit-text-stroke:0.45px #000;">24</span>
<span class="t" style="left:69.00px;top:1329.95px;font-size:34.88px;font-weight:normal;color:#000;transform:scaleX(1.0574);-webkit-text-stroke:1.1px #000;">Grand Total</span>
<span class="t" style="left:1017.20px;top:1330.69px;font-size:34.01px;font-weight:normal;color:#000;transform:scaleX(1.0047);-webkit-text-stroke:1.1px #000;">694</span>
<span class="t" style="left:1397.30px;top:1330.69px;font-size:34.01px;font-weight:normal;color:#000;transform:scaleX(1.0047);-webkit-text-stroke:1.1px #000;">227</span>
<div class="a" style="left:845.3px;top:667px;width:239.4px;height:62px;box-sizing:border-box;border:4.8px solid #217346"></div>
<div class="a" style="left:1070px;top:714px;width:20px;height:20px;background:#fff"></div>
<div class="a" style="left:1074px;top:718px;width:14px;height:14px;background:#217346"></div>
<div class="a" style="left:1217px;top:94.6px;width:89px;height:86px;box-sizing:border-box;border:8px solid #ff0000;box-shadow:5px 6px 6px rgba(0,0,0,0.33), inset 5px 5px 6px rgba(0,0,0,0.28)"></div>
<div class="a" style="left:1285.0px;top:43.0px;width:78px;height:78px;border-radius:50%;background:#8b0000"></div>
<div class="a" style="left:828.1px;top:687.9px;width:79px;height:79px;border-radius:50%;background:#8b0000"></div>
<span class="t" style="left:1304.00px;top:46.84px;font-size:68.31px;font-weight:bold;color:#fff;transform:scaleX(0.9425);">2</span>
<svg class="a" style="left:0;top:0" width="1536" height="1382"><polygon points="862.4,702 875.1,702 875.1,750 863.8,750 863.8,715.2 852.5,719.4 852.5,710.4" fill="#fff"/></svg>
</body></html>
